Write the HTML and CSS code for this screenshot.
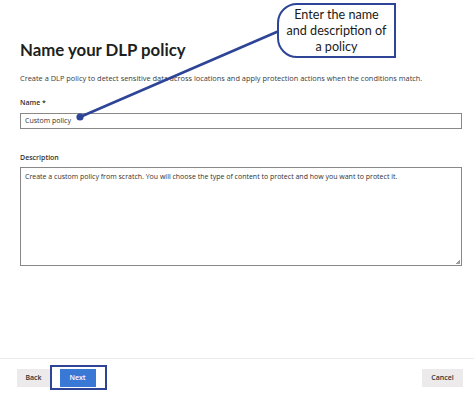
FILE: index.html
```html
<!DOCTYPE html>
<html lang="en">
<head>
    <meta charset="UTF-8">
    <meta name="viewport" content="width=device-width, initial-scale=1.0">
    <title>Name your DLP policy</title>
    <link rel="stylesheet" href="styles.css">
</head>
<body>
    <div class="page">
        <main class="content">
            <h1>Name your DLP policy</h1>
            <p class="intro">Create a DLP policy to detect sensitive data across locations and apply protection actions when the conditions match.</p>

            <label class="field-label" for="policyName">Name *</label>
            <div class="input">Custom policy</div>

            <label class="field-label desc-label" for="policyDesc">Description</label>
            <div class="textarea">Create a custom policy from scratch. You will choose the type of content to protect and how you want to protect it.<span class="grip"></span></div>
        </main>

        <footer class="footer">
            <button class="btn">Back</button>
            <span class="highlight"><button class="btn btn-primary">Next</button></span>
            <button class="btn btn-cancel">Cancel</button>
        </footer>

        <!-- annotation overlay -->
        <svg class="pointer" width="474" height="396" viewBox="0 0 474 396">
            <line x1="279" y1="31" x2="80" y2="117" stroke="#2e4597" stroke-width="2.6" stroke-linecap="round"/>
            <circle cx="80" cy="117" r="3.6" fill="#2e4597"/>
        </svg>
        <div class="callout">Enter the name<br>and description of<br>a policy</div>
    </div>
</body>
</html>
```

FILE: styles.css
```css
body {
    margin: 0;
    background: #fff;
    font-family: "Open Sans", "Noto Sans", sans-serif;
    color: #323130;
}
.page {
    position: relative;
    width: 474px;
    height: 396px;
    display: flex;
    flex-direction: column;
    overflow: hidden;
}
.content {
    flex: 1;
    padding: 0 12px 0 20px;
}
h1 {
    margin: 38px 0 0;
    font-family: Lato, "Open Sans", sans-serif;
    font-size: 16.8px;
    font-weight: 700;
    line-height: 24px;
    color: #201f1e;
}
.intro {
    margin: 10px 0 0;
    font-size: 7.4px;
    line-height: 12px;
    color: #3b3a39;
}
.field-label {
    display: block;
    margin-top: 14px;
    font-size: 7px;
    font-weight: 600;
    line-height: 10px;
    color: #323130;
}
.desc-label {
    margin-top: 24px;
}
.input {
    margin-top: 5px;
    height: 16px;
    box-sizing: border-box;
    border: 1px solid #8a8886;
    padding: 0 4px;
    font-size: 7px;
    line-height: 14px;
    color: #323130;
}
.textarea {
    position: relative;
    margin-top: 4px;
    height: 99px;
    border: 1px solid #8a8886;
    padding: 4px 4px;
    box-sizing: border-box;
    font-size: 7px;
    line-height: 10px;
    color: #323130;
}
.grip {
    position: absolute;
    right: 1px;
    bottom: 1px;
    width: 4px;
    height: 4px;
    background: linear-gradient(135deg, transparent 50%, #a19f9d 50%);
}
.footer {
    height: 37px;
    border-top: 1px solid #edebe9;
    display: flex;
    align-items: center;
    padding: 0 11px 0 17px;
}
.btn {
    height: 18px;
    padding: 0;
    width: 33px;
    border: none;
    background: #eceaea;
    font-family: "Open Sans", "Noto Sans", sans-serif;
    font-size: 7px;
    font-weight: 600;
    color: #323130;
}
.btn-primary {
    width: 36px;
    background: #3a78d6;
    color: #fff;
}
.btn-cancel {
    width: 41px;
    margin-left: auto;
}
.highlight {
    display: flex;
    align-items: center;
    height: 25px;
    box-sizing: border-box;
    padding: 0 9.5px 0 7.5px;
    border: 2.5px solid #2e4597;
}
.pointer {
    position: absolute;
    left: 0;
    top: 0;
}
.callout {
    position: absolute;
    left: 277px;
    top: 3px;
    width: 115px;
    height: 51px;
    border: 2.5px solid #2e4597;
    border-radius: 20px 0 0 20px;
    background: #fff;
    font-family: Lato, "Open Sans", sans-serif;
    font-size: 12.6px;
    line-height: 16px;
    text-align: center;
    color: #1a1a1a;
    display: flex;
    align-items: center;
    justify-content: center;
}
```
